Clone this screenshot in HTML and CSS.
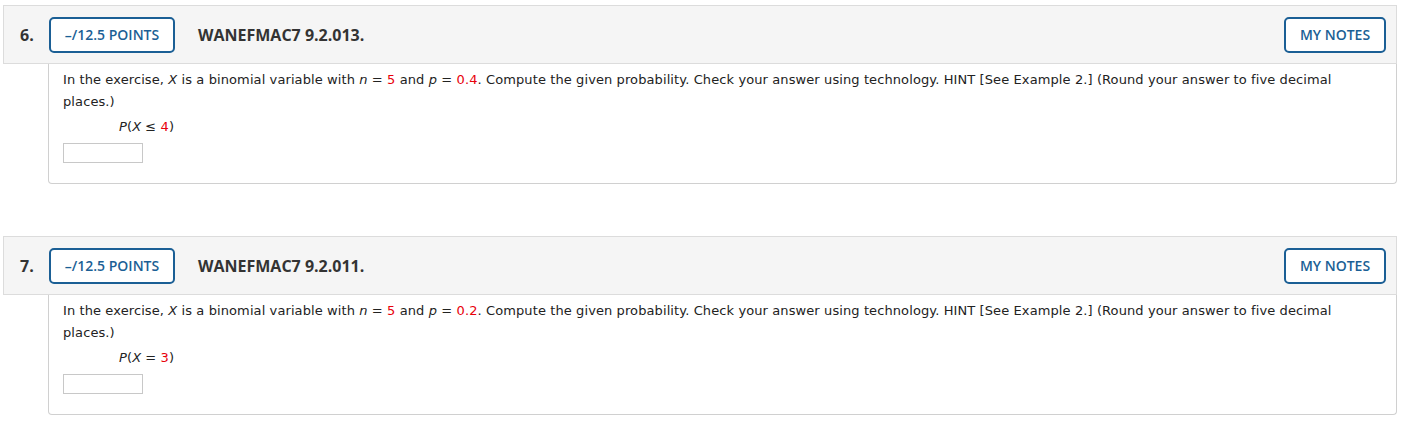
FILE: index.html
```html
<!DOCTYPE html>
<html>
<head>
<meta charset="utf-8">
<link rel="stylesheet" href="styles.css">
</head>
<body>
<div class="question">
  <div class="q-head">
    <span class="q-num">6.</span>
    <button class="btn pts">–/12.5 POINTS</button>
    <span class="q-title">WANEFMAC7 9.2.013.</span>
    <button class="btn notes">MY NOTES</button>
  </div>
  <div class="q-body">
    <p class="q-text">In the exercise, <i>X</i> is a binomial variable with <i>n</i> = <span class="red">5</span> and <i>p</i> = <span class="red">0.4</span>. Compute the given probability. Check your answer using technology. HINT [See Example 2.] (Round your answer to five decimal places.)</p>
    <p class="q-expr"><i>P</i>(<i>X</i> ≤ <span class="red">4</span>)</p>
    <input class="answer" type="text">
  </div>
</div>
<div class="question">
  <div class="q-head">
    <span class="q-num">7.</span>
    <button class="btn pts">–/12.5 POINTS</button>
    <span class="q-title">WANEFMAC7 9.2.011.</span>
    <button class="btn notes">MY NOTES</button>
  </div>
  <div class="q-body">
    <p class="q-text">In the exercise, <i>X</i> is a binomial variable with <i>n</i> = <span class="red">5</span> and <i>p</i> = <span class="red">0.2</span>. Compute the given probability. Check your answer using technology. HINT [See Example 2.] (Round your answer to five decimal places.)</p>
    <p class="q-expr"><i>P</i>(<i>X</i> = <span class="red">3</span>)</p>
    <input class="answer" type="text">
  </div>
</div>
</body>
</html>
```
FILE: styles.css
```css
html, body { margin: 0; padding: 0; background: #fff; }
body { padding: 5px 0 0 3px; width: 1394px; }
.question { margin-bottom: 52px; }
.q-head {
  display: flex;
  align-items: center;
  height: 57px;
  background: #f5f5f5;
  border: 1px solid #dcdcdc;
  font-family: "Open Sans", "Liberation Sans", sans-serif;
  color: #333;
}
.q-num { width: 45px; padding-left: 16px; box-sizing: border-box; font-weight: 700; font-size: 16px; }
.btn {
  height: 36px;
  box-sizing: border-box;
  border: 2px solid #1b5f95;
  border-radius: 5px;
  background: #fff;
  color: #1b5f95;
  font-family: "Open Sans", "Liberation Sans", sans-serif;
  font-weight: 600;
  font-size: 14px;
  padding: 0;
}
.pts { width: 126px; }
.q-title { margin-left: 23px; font-weight: 700; font-size: 16px; flex: 1; }
.notes { width: 102px; margin-right: 10px; }
.q-body {
  margin-left: 45px;
  border: 1px solid #d0d0d0;
  border-top: none;
  border-radius: 0 0 4px 4px;
  padding: 5px 14px 20px;
  font-family: "DejaVu Sans", Verdana, sans-serif;
  font-size: 13px;
  letter-spacing: 0.1px;
  color: #222;
}
.q-text { margin: 0; line-height: 22px; width: 1300px; }
.q-expr { margin: 3px 0 0 56px; line-height: 22px; }
.red { color: #e8000b; }
.answer {
  display: block;
  margin-top: 5px;
  width: 80px;
  height: 20px;
  box-sizing: border-box;
  border: 1px solid #c8c8c8;
  padding: 0;
}
```
